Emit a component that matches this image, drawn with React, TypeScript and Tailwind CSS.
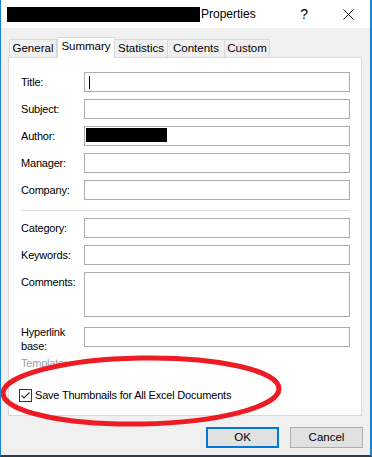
import React from "react";

const font = { fontFamily: '"Liberation Sans", Arial, sans-serif' };

function Field({ label, h = 20 }: { label: string; h?: number }) {
  return (
    <div className="flex items-start">
      <div className="w-[63px] shrink-0 text-[11px] tracking-[-0.2px] leading-[14px] text-black pt-[3px]">{label}</div>
      <div className="w-[266px] border border-[#ababab] bg-white" style={{ height: h }} />
    </div>
  );
}

export default function App() {
  return (
    <div
      className="relative w-[372px] h-[457px] bg-[#f0f0f0] border-l border-r-2 border-[#1883d7] border-b-2 border-b-[#2f3b48] flex flex-col overflow-hidden"
      style={font}
    >
      {/* title bar */}
      <div className="h-[28px] bg-white flex items-center shrink-0 relative">
        <div className="ml-[6px] w-[193px] h-[15px] bg-black" />
        <div className="text-[12px] text-black ml-[1px] leading-none">Properties</div>
        <div className="ml-auto mr-[62px] text-[14px] text-black leading-none">?</div>
        <svg className="absolute left-[342px] top-[9px]" width="11" height="11" viewBox="0 0 11 11">
          <path d="M0.5 0.5 L10.5 10.5 M10.5 0.5 L0.5 10.5" stroke="#111" strokeWidth="1" />
        </svg>
      </div>

      {/* body */}
      <div className="flex flex-col pl-[7px] pt-[9px]">
        {/* tabs */}
        <div className="flex items-end h-[20px] pl-[1px] relative z-10">
          <div className="w-[48px] h-[18px] border border-b-0 border-[#d9d9d9] bg-[#f0f0f0] text-[11.5px] leading-[17px] text-center text-black">General</div>
          <div className="w-[58px] h-[21px] border border-b-0 border-[#d9d9d9] bg-white text-[11.5px] leading-[16px] text-center text-black -mb-[1px]">Summary</div>
          <div className="w-[53px] h-[18px] border border-l-0 border-b-0 border-[#d9d9d9] bg-[#f0f0f0] text-[11.5px] leading-[17px] text-center text-black">Statistics</div>
          <div className="w-[57px] h-[18px] border border-l-0 border-b-0 border-[#d9d9d9] bg-[#f0f0f0] text-[11.5px] leading-[17px] text-center text-black">Contents</div>
          <div className="w-[45px] h-[18px] border border-l-0 border-b-0 border-[#d9d9d9] bg-[#f0f0f0] text-[11.5px] leading-[17px] text-center text-black">Custom</div>
        </div>

        {/* panel */}
        <div className="w-[354px] h-[359px] border border-[#d9d9d9] bg-white pl-[12px] pt-[14px] flex flex-col">
          <div className="flex flex-col gap-[7px]">
            <div className="flex items-start">
              <div className="w-[63px] shrink-0 text-[11px] tracking-[-0.2px] leading-[14px] text-black pt-[3px]">Title:</div>
              <div className="w-[266px] h-[20px] border border-[#ababab] bg-white relative">
                <div className="absolute left-[4px] top-[3px] w-[1px] h-[13px] bg-black" />
              </div>
            </div>
            <Field label="Subject:" />
            <div className="flex items-start">
              <div className="w-[63px] shrink-0 text-[11px] tracking-[-0.2px] leading-[14px] text-black pt-[3px]">Author:</div>
              <div className="w-[266px] h-[20px] border border-[#ababab] bg-white pt-[1px] pl-[1px]">
                <div className="w-[81px] h-[14px] bg-black" />
              </div>
            </div>
            <Field label="Manager:" />
            <Field label="Company:" />
          </div>
          <div className="w-[329px] h-[1px] bg-[#dcdcdc] mt-[10px] mb-[7px]" />
          <div className="flex flex-col gap-[7px]">
            <Field label="Category:" />
            <Field label="Keywords:" />
            <Field label="Comments:" h={45} />
          </div>
          <div className="mt-[10px]">
            <div className="flex items-start">
              <div className="w-[63px] shrink-0 text-[11px] tracking-[-0.2px] leading-[14px] text-black -mt-[2px]">
                <div>Hyperlink</div>
                <div>base:</div>
              </div>
              <div className="w-[266px] h-[20px] border border-[#ababab] bg-white" />
            </div>
          </div>
          <div className="text-[11px] tracking-[-0.2px] leading-[14px] text-[#a0a0a0] mt-[3px]">Template:</div>
          <div className="flex items-center mt-[18px] -ml-[2px]">
            <div className="w-[13px] h-[13px] border border-[#333] bg-white flex items-center justify-center">
              <svg width="11" height="11" viewBox="0 0 11 11">
                <path d="M1.5 5.5 L4 8 L9.5 2.5" stroke="#333" strokeWidth="1.2" fill="none" />
              </svg>
            </div>
            <div className="ml-[3px] text-[11px] tracking-[-0.2px] leading-[14px] text-black">Save Thumbnails for All Excel Documents</div>
          </div>
        </div>

        {/* buttons */}
        <div className="flex mt-[11px] pl-[198px] gap-[11px]">
          <div className="w-[73px] h-[21px] border-2 border-[#0078d7] bg-[#e1e1e1] text-[11.5px] leading-[17px] text-center text-black">OK</div>
          <div className="w-[73px] h-[21px] border border-[#adadad] bg-[#e1e1e1] text-[11.5px] leading-[19px] text-center text-black">Cancel</div>
        </div>
      </div>

      {/* red ellipse annotation */}
      <svg className="absolute left-0 top-0 pointer-events-none" width="372" height="457" viewBox="0 0 372 457">
        <ellipse cx="140" cy="391" rx="138" ry="33" fill="none" stroke="#ed1c24" strokeWidth="5" transform="rotate(-1 140 391)" />
      </svg>
    </div>
  );
}
